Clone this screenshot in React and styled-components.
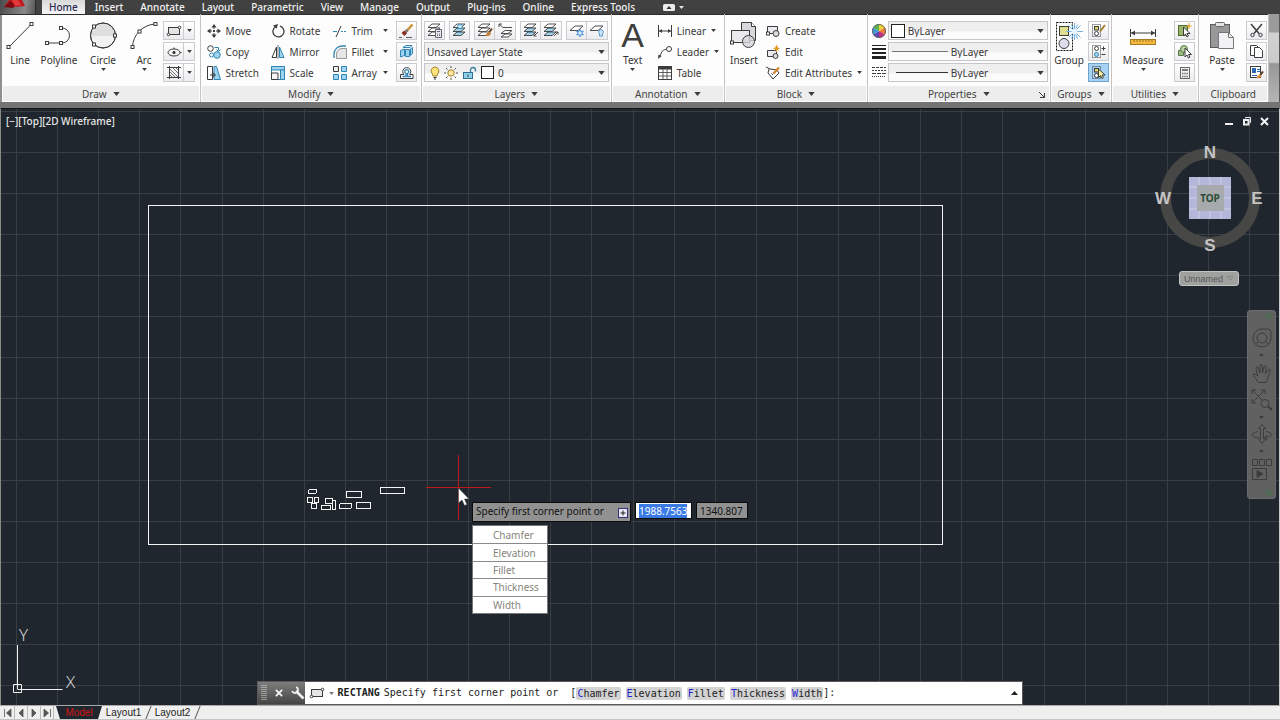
import { useEffect, useRef } from "react";
import styled, { createGlobalStyle, css } from "styled-components";

const GlobalStyle = createGlobalStyle`
  * {
    box-sizing: border-box;
  }

  body {
    margin: 0;
    background: #1f262e;
  }

  button,
  input,
  select {
    font: inherit;
    color: inherit;
    margin: 0;
    padding: 0;
    border: 0;
    background: none;
  }

  svg {
    display: block;
    flex: none;
  }
`;

const Page = styled.div`
  display: flex;
  flex-direction: column;
  min-height: 100vh;
  font-family: "Noto Sans", "Open Sans", sans-serif;
  font-size: 10px;
  line-height: 12px;
  color: #2b2b2b;
`;

/* Menu */

const MenuBar = styled.nav`
  display: flex;
  height: 14px;
  background: #414141;
`;

const AppButton = styled.button`
  width: 36px;
  height: 14px;
  margin-right: 6px;
  overflow: hidden;
  border-right: 1px solid #2c2c2c;
  background: linear-gradient(100deg, #4a4a4a, #8a8a8a 70%, #555);
`;

const MenuTab = styled.button`
  height: 14px;
  padding: 0 7px;
  margin-right: 3px;
  font-weight: 500;
  line-height: 14px;
  color: ${({ $active }) => ($active ? "#2a2a55" : "#f2f2f2")};
  background: ${({ $active }) =>
    $active ? "linear-gradient(#d9d9d9, #f6f6f6)" : "none"};
`;

const MinimizeButton = styled.button`
  display: flex;
  align-items: center;
  gap: 4px;
  margin-left: 18px;
`;

/* Ribbon */

const RibbonBar = styled.div`
  display: flex;
  height: 94px;
  padding: 0 0 0 2px;
  border-bottom: 6px solid #747474;
  background: #fdfdfd;
  box-shadow: inset 0 1px 0 #2c2c2c, inset 2px 0 0 #8f8f8f;
`;

const PanelBox = styled.section`
  display: flex;
  flex-direction: column;
  flex: ${({ $size }) => $size} 1 0;
  min-width: max-content;
  height: 88px;
  border-right: 1px solid #c4c4c4;
`;

const PanelBody = styled.div`
  display: flex;
  height: 72px;
  padding: 7px ${({ $right = 0 }) => $right}px 0 ${({ $left = 0 }) => $left}px;
`;

const PanelTitle = styled.button`
  position: relative;
  display: flex;
  align-items: center;
  justify-content: center;
  gap: 6px;
  height: 15px;
  margin: 0 1px;
  color: #444;
  background: #ededed;
`;

const Launcher = styled.span`
  position: absolute;
  right: 4px;
  top: 6px;
`;

const PanelEnd = styled.div`
  flex: none;
  width: 11px;
  height: 88px;
  border-right: 1px solid #555;
  background: linear-gradient(
    #9b9b9b 18px,
    #d2d2d2 19px,
    #cacaca 48px,
    #989898 50px,
    #b5b5b5
  );
`;

const BigButton = styled.button`
  display: flex;
  flex-direction: column;
  align-items: center;
  width: ${({ $width }) => $width}px;
  height: 54px;
  color: #333;
  white-space: nowrap;
`;

const BigIcon = styled.span`
  display: flex;
  justify-content: center;
  height: 33px;
`;

const CaretSlot = styled.span`
  margin-top: 2px;
`;

const ToolGrid = styled.div`
  display: grid;
  grid-template-columns: ${({ $columns }) => $columns};
  grid-auto-rows: 19px;
  row-gap: 2px;
  margin-left: ${({ $left = 0 }) => $left}px;
  ${({ $fill }) => $fill && "flex: 1;"}
`;

const Tool = styled.button`
  display: flex;
  align-items: center;
  gap: 5px;
  color: #3a3a3a;
  white-space: nowrap;
  ${({ $spread }) =>
    $spread &&
    css`
      padding-right: 8px;

      & > :last-child {
        margin-left: auto;
      }
    `}
`;

const boxed = css`
  display: flex;
  align-items: center;
  justify-content: center;
  height: 19px;
  border: 1px solid #cbcbd0;
  background: linear-gradient(#ffffff, #ececef);
`;

const IconButton = styled.button`
  ${boxed}
  width: 21px;
  ${({ $pressed }) =>
    $pressed &&
    css`
      border-color: #6fa3cc;
      background: #a5d2f5;
    `}
`;

const SplitButton = styled.div`
  display: flex;

  & > :last-child {
    width: 12px;
    margin-left: -1px;
  }
`;

const IconGroup = styled.div`
  display: flex;

  & > * + * {
    margin-left: -1px;
    width: 22px;
  }
`;

const LayerStack = styled.div`
  display: flex;
  flex-direction: column;
  flex: 1;
  gap: 2px;
`;

const LayerRow = styled.div`
  display: flex;
  gap: 4px;
`;

const ComboBox = styled.div`
  position: relative;
  display: flex;
  align-items: center;
  gap: 3px;
  min-width: 0;
  height: 19px;
  padding: 0 5px 0 2px;
  border: 1px solid #c6c6ca;
  background: linear-gradient(#efeff0 50%, #fbfbfb 60%);

  select {
    appearance: none;
    flex: 1;
    min-width: 0;
    height: 17px;
    outline: none;
    color: #3a3a3a;
  }

  > svg:last-child {
    position: absolute;
    right: 3px;
    top: 7px;
    pointer-events: none;
  }
`;

const LayerIcons = styled.span`
  display: flex;
  align-items: center;
  gap: 4px;
  padding: 0 1px 0 3px;
`;

const Swatch = styled.span`
  width: ${({ $size }) => $size}px;
  height: ${({ $size }) => $size}px;
  border: 1px solid #222;
  background: #fff;
`;

const LineSample = styled.span`
  width: ${({ $width }) => $width}px;
  height: 1px;
  margin-left: auto;
  background: ${({ $color }) => $color};
`;

const SampleSlot = styled.span`
  display: flex;
  width: 57px;
`;

const RowIcon = styled.span`
  display: flex;
  align-items: center;
`;

/* Drawing area */

const Viewport = styled.main`
  position: relative;
  flex: 1;
  min-height: 480px;
  overflow: hidden;
  border-left: 1px solid #8b8b86;
  border-right: 1px solid #c8c8c8;
  border-top: 1px solid #11161b;
  background: #1f262e;
`;

const Drawing = styled.svg`
  position: absolute;
  inset: 0;
  width: 100%;
  height: 100%;
`;

const ViewBar = styled.div`
  position: relative;
  display: flex;
  justify-content: space-between;
  padding: 6px 10px 0 5px;
  font-weight: 500;
  color: #e6e6e6;

  div {
    display: flex;
    align-items: center;
    gap: 8px;
  }
`;

const ViewCube = styled.div`
  position: absolute;
  top: 33px;
  right: 13px;
  display: flex;
  flex-direction: column;
  align-items: center;
`;

const UcsButton = styled.button`
  display: flex;
  align-items: center;
  justify-content: space-between;
  width: 60px;
  height: 15px;
  margin: 17px 2px 0 0;
  padding: 0 4px;
  border: 1px solid #c2c4c2;
  border-radius: 3px;
  font-family: "Liberation Sans", sans-serif;
  font-size: 9px;
  color: #565856;
  background: #9fa19f;
`;

const NavBar = styled.div`
  position: absolute;
  top: 201px;
  right: 3px;
  display: flex;
  flex-direction: column;
  align-items: center;
  width: 29px;
  height: 189px;
  padding-top: 14px;
  border: 1px solid #6b6b70;
  border-radius: 3px;
  background: #616161;
`;

const NavDot = styled.span`
  position: absolute;
  right: 3px;
  ${({ $edge }) => $edge}: 2px;
  width: 6px;
  height: 6px;
  border: 1px solid #3f7a45;
  border-radius: 50%;
`;

const NavButton = styled.button`
  display: flex;
  align-items: center;
  justify-content: center;
  width: 24px;
  height: ${({ $height }) => $height}px;
`;

const DynamicInput = styled.div`
  position: absolute;
  left: 471px;
  top: 393px;
  display: flex;
  align-items: flex-start;
  gap: 4px;
`;

const Prompt = styled.label`
  display: flex;
  align-items: center;
  justify-content: space-between;
  width: 159px;
  height: 20px;
  padding: 0 2px 2px 3px;
  border: 1px solid #0c0c0c;
  color: #111;
  background: #919191;

  svg {
    margin-top: 4px;
  }
`;

const Coordinate = styled.input`
  && {
    width: ${({ $width }) => $width}px;
    height: 17px;
    padding: 0 3px;
    border: 1px solid #0c0c0c;
    outline: none;
    color: #111;
    background: ${({ $active }) => ($active ? "#fff" : "#919191")};
  }

  &::selection {
    color: #fff;
    background: #3a7ae4;
  }
`;

const OptionMenu = styled.div`
  position: absolute;
  left: 471px;
  top: 416px;
  display: grid;
  grid-auto-rows: 1fr;
  width: 76px;
  height: 89px;
  border: 1px solid #777;
  background: #fff;
`;

const Option = styled.button`
  padding-left: 20px;
  text-align: left;
  color: #85857a;

  & + & {
    border-top: 1px solid #8a8a8a;
  }
`;

const CommandLine = styled.div`
  position: absolute;
  left: 20%;
  right: 20%;
  bottom: 0;
  display: flex;
  height: 24px;
  border: 1px solid #595959;
  font-family: "DejaVu Sans Mono", monospace;
  color: #222;
  background: #fff;
`;

const CommandGrip = styled.div`
  display: flex;
  align-items: center;
  gap: 8px;
  width: 47px;
  padding: 0 3px;
  background: linear-gradient(#7d7d7d, #454545);
`;

const CommandText = styled.div`
  display: flex;
  align-items: center;
  flex: 1;
  gap: 4px;
  padding: 0 4px;
  white-space: nowrap;

  > :last-child {
    margin-left: auto;
  }
`;

const Keyword = styled.button`
  height: 13px;
  padding: 0 1px;
  line-height: 13px;
  border-radius: 2px;
  background: #d3d3d3;

  &::first-letter {
    color: #2424d0;
  }
`;

const Keywords = styled.span`
  display: flex;
  align-items: center;
  gap: 5px;
  margin-left: 8px;
`;

const Bracketed = styled.span`
  display: flex;
`;

/* Layout tabs */

const LayoutBar = styled.footer`
  display: flex;
  height: 15px;
  padding-left: 2px;
  border-top: 1px solid #a9a9a9;
  border-bottom: 1px solid #c4c4c4;
  font-family: "Liberation Sans", sans-serif;
  background: #efefef;
`;

const PageButton = styled.button`
  display: flex;
  align-items: center;
  justify-content: center;
  width: 13px;
  border-right: 1px solid #bdbdbd;
`;

const ModelTab = styled.button`
  width: 46px;
  margin-left: 2px;
  color: #d01515;
  background: #1f262e;
  clip-path: polygon(0 0, 100% 0, calc(100% - 4px) 100%, 4px 100%);
`;

const LayoutTab = styled.button`
  position: relative;
  width: 49px;
  padding-right: 6px;
  color: #222;

  &::after {
    content: "";
    position: absolute;
    right: 2px;
    top: 0;
    height: 13px;
    border-right: 1px solid #555;
    transform: skewX(-22deg);
  }
`;

/* Icons */

const INK = "#3c3c3c";
const BLUE = "#2f86b5";
const SKY = "#9fd4ee";

const Icon = ({ w = 14, h = 14, children, ...rest }) => (
  <svg
    width={w}
    height={h}
    viewBox={`0 0 ${w} ${h}`}
    fill="none"
    stroke={INK}
    aria-hidden="true"
    {...rest}
  >
    {children}
  </svg>
);

const Caret = ({ w = 5, color = INK }) => (
  <svg width={w} height={w === 5 ? 3 : 4} viewBox="0 0 8 5" aria-hidden="true">
    <path d="M0 0h8L4 5z" fill={color} />
  </svg>
);

const Knob = ({ x, y }) => (
  <rect x={x - 1.5} y={y - 1.5} width="3" height="3" fill="#fff" />
);

const LineIcon = () => (
  <Icon w={28} h={28}>
    <path d="M2.500 26.500L25.500 3" />
    <Knob x={2.5} y={26} />
    <Knob x={25.5} y={3} />
  </Icon>
);

const PolylineIcon = () => (
  <Icon w={30} h={28}>
    <path d="M3 22H18A7.500 7.500 0 0 0 18 7" />
    <Knob x={3} y={22} />
    <Knob x={17} y={22} />
    <Knob x={17} y={7} />
  </Icon>
);

const CircleIcon = () => (
  <Icon w={28} h={30}>
    <circle cx="14" cy="14.500" r="12.500" fill="#f2f2f2" />
    <path d="M2 15h24a12 12 0 0 0-24 0z" fill="#dedede" stroke="none" />
    <circle cx="14" cy="14.500" r="12.500" />
    <Knob x={5} y={5.5} />
    <Knob x={5} y={23.5} />
    <Knob x={26} y={14.5} />
  </Icon>
);

const ArcIcon = () => (
  <Icon w={28} h={28}>
    <path d="M2.500 26A24 24 0 0 1 25.500 3" />
    <Knob x={2.5} y={26} />
    <Knob x={9.5} y={10.5} />
    <Knob x={25.5} y={3} />
  </Icon>
);

const RectIcon = () => (
  <Icon w={16} h={12}>
    <rect x="2.500" y="2.500" width="11" height="7" fill="#e4e4e4" />
    <circle cx="2.500" cy="9.500" r="1.300" fill="#fff" />
    <circle cx="13.500" cy="2.500" r="1.300" fill="#fff" />
  </Icon>
);

const EllipseIcon = () => (
  <Icon w={16} h={12}>
    <ellipse cx="8" cy="6.500" rx="6" ry="3.500" />
    <circle cx="8" cy="6.500" r="1.200" fill={INK} />
    <path d="M8 3v-1.500M14 6.500h1.500" />
  </Icon>
);

const HatchIcon = () => (
  <Icon w={16} h={15}>
    <path d="M3.500 1v13M12.500 1v13M1 2.500h14M1 12.500h14" />
    <path d="M4 4l8 8M4 7l5 5M7 3l5 5M4 10l2 2M10 3l2 2" strokeWidth=".7" />
  </Icon>
);

const MoveIcon = () => (
  <Icon>
    <path d="M7 1v4M7 9v4M1 7h4M9 7h4" />
    <path
      d="M7 0l2.500 3.500h-5zM7 14l2.500-3.500h-5zM0 7l3.500-2.500v5zM14 7l-3.500-2.500v5z"
      fill={INK}
      stroke="none"
    />
    <rect x="6" y="6" width="2" height="2" fill={INK} stroke="none" />
  </Icon>
);

const RotateIcon = () => (
  <Icon>
    <path d="M4.500 2.800A5.500 5.500 0 1 0 9 2.200" strokeWidth="1.300" />
    <path d="M2 1.500L7 0 5.500 4.800z" fill={INK} stroke="none" />
  </Icon>
);

const TrimIcon = () => (
  <Icon>
    <path d="M0 7.500h4" stroke={BLUE} />
    <path d="M3 13L8 2" />
    <path d="M8 7.500h6" strokeDasharray="2 1" stroke={BLUE} />
  </Icon>
);

const CopyIcon = () => (
  <Icon>
    <circle cx="3.500" cy="3.500" r="2.800" />
    <circle cx="10" cy="10" r="3.300" fill={SKY} stroke={BLUE} />
    <circle cx="4.500" cy="10" r="2" fill="#fff" stroke={BLUE} />
    <path d="M7.500 2.500h4v3M9.500 4.500l2 2 2-2" stroke={BLUE} />
  </Icon>
);

const MirrorIcon = () => (
  <Icon>
    <path d="M5.500 2v10.500H1z" />
    <path d="M8.500 2v10.500H13z" fill={SKY} stroke={BLUE} />
    <path d="M7 0v14" strokeWidth=".7" />
  </Icon>
);

const FilletIcon = () => (
  <Icon>
    <path d="M1 13V9a8 8 0 0 1 8-8h4" stroke={BLUE} strokeWidth="1.300" />
    <path d="M3.500 13.500V9A5.500 5.500 0 0 1 9 3.500h4.500v10z" fill="#e6e6e6" stroke="#999" />
  </Icon>
);

const StretchIcon = () => (
  <Icon>
    <path d="M.5.500h5v13h-5z" fill="#fff" />
    <path d="M7 .5h2.500l4 13H7z" fill={SKY} stroke={BLUE} />
    <path d="M3 9h5M6 7l2.500 2L6 11" />
  </Icon>
);

const ScaleIcon = () => (
  <Icon>
    <path d="M.5.500h13v13h-13z" fill="#fff" stroke={BLUE} />
    <path d="M.5.500h13v3.500H.5z" fill={SKY} stroke={BLUE} />
    <path d="M9.500 4h4v9.500h-4z" fill={SKY} stroke={BLUE} />
    <path d="M.5 7h6.500v6.500H.5z" fill="#f4f4f4" />
  </Icon>
);

const ArrayIcon = () => (
  <Icon>
    <path d="M.5.500h5v5h-5z" fill="#eee" />
    <path
      d="M8.500.500h5v5h-5zM.5 8.500h5v5h-5zM8.500 8.500h5v5h-5z"
      fill={SKY}
      stroke={BLUE}
    />
  </Icon>
);

const EraseIcon = () => (
  <Icon w={15} h={15}>
    <path d="M13.500 1.500L8 7.500" stroke="#c89339" strokeWidth="2.500" />
    <path d="M8.500 7L6 9.500" stroke="#7a7a7a" strokeWidth="3" />
    <path d="M6.500 9L4 11.500" stroke="#8c2f22" strokeWidth="4" />
    <path d="M0 14.500h3M7 14.500h6" strokeWidth=".8" />
  </Icon>
);

const ExplodeIcon = () => (
  <Icon w={15} h={15} stroke={BLUE}>
    <path
      d="M1.500 6.500l4-1.500v6.500l-4 1.500zM6.500 5.500h4v7h-4zM11.500 5l2-1.500v6l-2 2z"
      fill={SKY}
    />
    <path d="M4 3.500l3-2h6l-2 2z" fill="#e3f4fc" />
  </Icon>
);

const OffsetIcon = () => (
  <Icon w={15} h={15}>
    <path d="M1.500 13.500v-4h3.500a4 4 0 1 1 5.500 0h3.500v4z" fill="#fff" />
    <path
      d="M3.500 11.500h3.500V8.500a2 2 0 1 1 1.500 0v3H12"
      stroke={BLUE}
      strokeWidth="1.300"
    />
  </Icon>
);

const LayerSheets = ({ fill = "#fff" }) => (
  <>
    <path d="M1 12.500h8l4-3.500H5z" fill={fill} />
    <path d="M1 8.500h8l4-3.500H5z" fill={fill} />
    <path d="M1 4.500h8l4-3.500H5z" fill="#fff" />
  </>
);

const LayerIcon = ({ fill, children }) => (
  <Icon w={16} h={15} strokeWidth=".9">
    <LayerSheets fill={fill} />
    {children}
  </Icon>
);

const SheetIcon = ({ children }) => (
  <Icon w={16} h={15} strokeWidth=".9">
    <path d="M1 7.500h8l5-4.500H6z" fill="#fff" />
    {children}
  </Icon>
);

const CalcGlyph = () => (
  <path
    d="M8.500 6.500h6v8h-6zM10 8.500h3M10 11h1M12 11h1M10 12.500h1M12 12.500h1"
    fill="#e8e8ee"
    stroke="#556"
  />
);

const BulbIcon = () => (
  <Icon w={10} h={14}>
    <path
      d="M5 1a4 4 0 0 1 2.500 7L7 10H3l-.5-2A4 4 0 0 1 5 1z"
      fill="#ffe27a"
      stroke="#a8842e"
    />
    <path d="M3.500 11.500h3M4 13h2" />
  </Icon>
);

const SunIcon = () => (
  <Icon>
    <circle cx="7" cy="7" r="3.200" fill="#ffe9a0" stroke="#a87f2e" />
    <path
      d="M7 0v2M7 12v2M0 7h2M12 7h2M2 2l1.500 1.500M10.500 10.500L12 12M12 2l-1.500 1.500M3.500 10.500L2 12"
      strokeWidth=".9"
    />
  </Icon>
);

const UnlockIcon = () => (
  <Icon w={15} h={14}>
    <path d="M8.500 7V4a2.500 2.500 0 0 1 5 0v1.500" strokeWidth="1.300" stroke="#3c7f9e" />
    <rect x="1.500" y="6.500" width="9" height="6" fill="#8fd0ec" stroke="#2d6f8f" />
    <path d="M6 8.500v2.500" />
  </Icon>
);

const TextIcon = styled.span`
  font-family: "Liberation Sans", sans-serif;
  font-size: 34px;
  line-height: 29px;
  color: #3f3f3f;
`;

const LinearIcon = () => (
  <Icon>
    <path d="M.5 1v12M13.500 1v12M1 7h12" />
    <path d="M1 7l3-2v4zM13 7l-3-2v4z" fill={INK} stroke="none" />
  </Icon>
);

const LeaderIcon = () => (
  <Icon>
    <path d="M2 12C3 9 3.500 4.500 8 4.500" />
    <path d="M0 14l.500-4.500 3 1.500z" fill={INK} stroke="none" />
    <circle cx="11" cy="4" r="2.500" />
  </Icon>
);

const TableIcon = () => (
  <Icon>
    <rect x=".5" y=".5" width="13" height="13" fill="#fff" />
    <path d="M1 2h12" strokeWidth="3" />
    <path d="M1 6.500h12M1 10h12M5 3v10M9 3v10" strokeWidth=".8" />
  </Icon>
);

const InsertIcon = () => (
  <Icon w={28} h={29}>
    <path d="M11.500 1.500h10l4 4v14h-14z" fill="#d9d9dd" />
    <path d="M21.500 1.500v4h4" fill="#fff" />
    <rect x="1.500" y="9.500" width="18" height="12" fill="#e9e9ec" />
    <circle cx="18.500" cy="20.500" r="6" fill="#d4d4d8" fillOpacity=".8" />
    <Knob x={2} y={21.5} />
  </Icon>
);

const BlockGlyph = () => (
  <>
    <path d="M1.500 2.500h10v7h-10z" fill="#ececf0" />
    <circle cx="10" cy="9.500" r="3" fill="#d9d9de" />
    <Knob x={2} y={9.5} />
  </>
);

const CreateIcon = () => (
  <Icon>
    <BlockGlyph />
  </Icon>
);

const EditBlockIcon = () => (
  <Icon>
    <path d="M1.500 5.500h9v6h-9z" fill="#ececf0" />
    <circle cx="9.500" cy="11" r="2.500" fill="#d9d9de" />
    <path
      d="M10.500 0v7M7.500 3.500h6M8.500 1.500l4 4M12.500 1.500l-4 4"
      stroke="#e39a20"
    />
  </Icon>
);

const EditAttributesIcon = () => (
  <Icon>
    <path d="M0 1l4 2 7 1 2 3-6 6-5-6 1-4" fill="#fff" />
    <path d="M5 7l2 2M7 6l2 2" stroke="#668" />
    <path d="M13 1.500L7.500 7.500" stroke="#d5842d" strokeWidth="2.200" />
  </Icon>
);

const ColorWheelIcon = () => (
  <Icon stroke="none">
    <path d="M7 7V0a7 7 0 0 1 6 3.500z" fill="#f0d33c" />
    <path d="M7 7l6-3.500a7 7 0 0 1 0 7z" fill="#ee7a34" />
    <path d="M7 7l6 3.500A7 7 0 0 1 7 14z" fill="#c2307d" />
    <path d="M7 7v7a7 7 0 0 1-6-3.500z" fill="#5a4bb5" />
    <path d="M7 7l-6 3.500a7 7 0 0 1 0-7z" fill="#3d9bd8" />
    <path d="M7 7L1 3.500A7 7 0 0 1 7 0z" fill="#58b44c" />
    <circle cx="7" cy="7" r="6.500" stroke="#666" />
  </Icon>
);

const LineweightIcon = () => (
  <Icon stroke="#222">
    <path d="M0 .5h14" />
    <path d="M0 4h14" strokeWidth="2" />
    <path d="M0 8h14" strokeWidth="2" />
    <path d="M0 12.500h14" strokeWidth="3" />
  </Icon>
);

const LinetypeIcon = () => (
  <Icon>
    <path d="M0 1.500h14" strokeDasharray="3 1" />
    <path d="M0 4.500h14" strokeDasharray="2 1" />
    <path d="M0 7.500h14" strokeDasharray="4 1" />
    <path d="M0 10.500h14" strokeDasharray="1 1" />
  </Icon>
);

const GroupIcon = () => (
  <Icon w={30} h={30}>
    <rect
      x="2.500"
      y="1.500"
      width="16"
      height="28"
      strokeDasharray="2 1"
      stroke="#111"
    />
    <rect x="5.500" y="5.500" width="9" height="9" fill="#dfe08d" />
    <circle cx="10" cy="22.500" r="5" fill="#dcdcea" />
    <path
      d="M20.500 2v17M12 10.500h17M14.500 4.500l12 12M26.500 4.500l-12 12M17.500 3.500l6 14M23.500 3.500l-6 14"
      stroke="#6fb0e6"
    />
    <circle cx="20.500" cy="10.500" r="3" fill="#eaf6ff" stroke="none" />
  </Icon>
);

const MiniGroup = () => (
  <>
    <rect x="1.500" y="1.500" width="8" height="12" strokeDasharray="1 1" />
    <rect x="3.500" y="3.500" width="4" height="3.500" fill="#e2d569" />
    <circle cx="5.500" cy="10.500" r="2" fill="#fff" />
  </>
);

const UngroupIcon = () => (
  <Icon w={15} h={15}>
    <MiniGroup />
    <path d="M14 2L9 8.500" stroke="#a5812f" strokeWidth="2" />
  </Icon>
);

const GroupEditIcon = () => (
  <Icon w={15} h={15}>
    <rect x="1.500" y="1.500" width="8" height="12" strokeDasharray="1 1" />
    <circle cx="5.500" cy="4.500" r="2" fill="#fff" />
    <circle cx="5.500" cy="10.500" r="2" fill={SKY} stroke={BLUE} />
    <path d="M10.500 4.500h4M12.500 2.500v4M10.500 10.500h4" />
  </Icon>
);

const GroupSelectIcon = () => (
  <Icon w={15} h={15}>
    <MiniGroup />
    <path
      d="M7.500 4v8.500l2-2 1.500 3 1.500-1-1.500-2.500h3z"
      fill="#fff3a0"
    />
  </Icon>
);

const MeasureIcon = () => (
  <Icon w={28} h={28}>
    <path d="M1.500 8v8M26.500 8v8M2 12h24" />
    <path d="M2 12l4-2.500v5zM26 12l-4-2.500v5z" fill={INK} stroke="none" />
    <rect x="1.500" y="18.500" width="25" height="5" fill="#f2b93e" stroke="#a57a22" />
    <path
      d="M5 19v2M8 19v2M11 19v2M14 19v2M17 19v2M20 19v2M23 19v2"
      stroke="#805c14"
      strokeWidth=".7"
    />
  </Icon>
);

const SelectAllIcon = () => (
  <Icon w={15} h={15}>
    <rect x="1.500" y="2.500" width="9" height="10" fill="#9bb46c" stroke="#4f6b2d" />
    <path d="M6.500 4v9l2-2 1.500 3 1.500-1-1.500-2.500h3z" fill="#fff" />
    <path d="M12 0v6M9.500 3h5" stroke="#e39a20" />
  </Icon>
);

const QuickSelectIcon = () => (
  <Icon w={15} h={15}>
    <path d="M1.500 6.500h5v5h-5z" fill="#9fbd85" stroke="#57784a" />
    <circle cx="7" cy="5" r="3.500" fill="#b7cfa2" stroke="#57784a" />
    <path d="M8 4v9l2-2 1.500 3 1.500-1-1.500-2.500h3z" fill="#fff" />
  </Icon>
);

const CalculatorIcon = () => (
  <Icon w={12} h={14}>
    <rect x="1.500" y="1.500" width="9" height="11" fill="#f1f1f1" stroke="#666" />
    <path d="M3 4h6" strokeWidth="2" stroke="#777" />
    <path
      d="M3 7.500h6M3 10.500h6"
      strokeDasharray="1.500 .75"
      strokeWidth="1.500"
      stroke="#777"
    />
  </Icon>
);

const PasteIcon = () => (
  <Icon w={26} h={29}>
    <rect x="1.500" y="3.500" width="19" height="23" fill="#98989b" stroke="#5c5c5c" />
    <rect x="6.500" y="1.500" width="9" height="4" rx="1" fill="#e4e4e4" stroke="#666" />
    <path d="M9.500 11.500h10l5 5v11h-15z" fill="#f2f2f5" stroke="#777" />
    <path d="M19.500 11.500v5h5" stroke="#777" />
  </Icon>
);

const CutIcon = () => (
  <Icon w={15} h={15}>
    <path d="M2 1l8 9.500M13 1L5 10.500" strokeWidth="1.500" />
    <circle cx="3.500" cy="12" r="1.700" />
    <circle cx="11.500" cy="12" r="1.700" />
  </Icon>
);

const CopyClipIcon = () => (
  <Icon w={15} h={15}>
    <path d="M1.500 1.500h6l2 2v8h-8z" fill="#fff" />
    <path d="M5.500 3.500h5l3 3v7h-8z" fill="#fff" />
  </Icon>
);

const MatchIcon = () => (
  <Icon w={15} h={15}>
    <rect x="1.500" y="1.500" width="10" height="11" fill="#fff" />
    <path d="M3 3h4v5H3z" fill="#2e64b0" stroke="none" />
    <path d="M8 4.500h3M8 6.500h3M3 10.500h5" stroke="#2e64b0" />
    <path d="M14 6.500l-3 4" stroke="#5b3a21" strokeWidth="2" />
    <path
      d="M11.500 9.500c-1 0-4 1-4 3.500 2.500 1 5-1 5-2.500z"
      fill="#d98a3a"
      stroke="none"
    />
  </Icon>
);

const WrenchIcon = () => (
  <Icon w={14} h={14}>
    <path d="M5 5l7.500 7.500" stroke="#f2f2f2" strokeWidth="2.500" />
    <path
      d="M5 1.200A3 3 0 1 1 1.200 5"
      stroke="#f2f2f2"
      strokeWidth="1.800"
    />
  </Icon>
);

const CrossIcon = ({ size = 9 }) => (
  <svg width={size} height={size} viewBox="0 0 9 9" aria-hidden="true">
    <path d="M1 1l7 7M8 1L1 8" stroke="#f4f4f4" strokeWidth="2" />
  </svg>
);

/* Parts */

const ToolButton = ({ icon, label, caret, spread }) => (
  <Tool $spread={spread}>
    {icon}
    <span>{label}</span>
    {caret && <Caret />}
  </Tool>
);

const LargeTool = ({ icon, label, caret, width }) => (
  <BigButton $width={width}>
    <BigIcon>{icon}</BigIcon>
    {label}
    {caret && (
      <CaretSlot>
        <Caret />
      </CaretSlot>
    )}
  </BigButton>
);

const Panel = ({
  title,
  size,
  left,
  right,
  menu = true,
  launcher,
  children,
}) => (
  <PanelBox $size={size}>
    <PanelBody $left={left} $right={right}>
      {children}
    </PanelBody>
    <PanelTitle>
      {title}
      {menu && <Caret w={7} />}
      {launcher && (
        <Launcher>
          <Icon w={6} h={6}>
            <path d="M0 0l5 5M5.500 1v4.500H1" />
          </Icon>
        </Launcher>
      )}
    </PanelTitle>
  </PanelBox>
);

const Split = ({ icon, label }) => (
  <SplitButton>
    <IconButton aria-label={label}>{icon}</IconButton>
    <IconButton aria-label={`${label} options`}>
      <Caret />
    </IconButton>
  </SplitButton>
);

const Combo = ({ label, value, children }) => (
  <ComboBox>
    {children}
    <select aria-label={label} defaultValue={value}>
      <option>{value}</option>
    </select>
    <Caret w={7} />
  </ComboBox>
);

const MENU_TABS = [
  "Home",
  "Insert",
  "Annotate",
  "Layout",
  "Parametric",
  "View",
  "Manage",
  "Output",
  "Plug-ins",
  "Online",
  "Express Tools",
];

const OPTIONS = ["Chamfer", "Elevation", "Fillet", "Thickness", "Width"];

function Menu() {
  return (
    <MenuBar>
      <AppButton aria-label="Application menu">
        <svg width="35" height="14" viewBox="0 0 35 14" aria-hidden="true">
          <path d="M4 7L9 0h13l3 6-10 1z" fill="#c31a1f" />
          <path d="M4 7l6-6 5 4-2 3z" fill="#7d0b10" />
          <path d="M12 0h6l3 5-6 1z" fill="#e23a3a" />
        </svg>
      </AppButton>
      {MENU_TABS.map((tab, index) => (
        <MenuTab key={tab} $active={index === 0}>
          {tab}
        </MenuTab>
      ))}
      <MinimizeButton aria-label="Minimize ribbon">
        <svg width="12" height="7" viewBox="0 0 12 7" aria-hidden="true">
          <rect width="12" height="7" rx="1.500" fill="#ececec" />
          <path d="M3.500 5L6 2l2.500 3z" fill="#333" />
        </svg>
        <Caret color="#e8e8e8" />
      </MinimizeButton>
    </MenuBar>
  );
}

function Ribbon() {
  return (
    <RibbonBar>
      <Panel title="Draw" size={199}>
        <LargeTool icon={<LineIcon />} label="Line" width={36} />
        <LargeTool icon={<PolylineIcon />} label="Polyline" width={42} />
        <LargeTool icon={<CircleIcon />} label="Circle" width={46} caret />
        <LargeTool icon={<ArcIcon />} label="Arc" width={36} caret />
        <ToolGrid $columns="32px" $left={1}>
          <Split icon={<RectIcon />} label="Rectangle" />
          <Split icon={<EllipseIcon />} label="Ellipse" />
          <Split icon={<HatchIcon />} label="Hatch" />
        </ToolGrid>
      </Panel>

      <Panel title="Modify" size={222} left={6}>
        <ToolGrid $columns="64px 62px 63px 21px">
          <ToolButton icon={<MoveIcon />} label="Move" />
          <ToolButton icon={<RotateIcon />} label="Rotate" />
          <ToolButton icon={<TrimIcon />} label="Trim" caret spread />
          <IconButton aria-label="Erase">
            <EraseIcon />
          </IconButton>
          <ToolButton icon={<CopyIcon />} label="Copy" />
          <ToolButton icon={<MirrorIcon />} label="Mirror" />
          <ToolButton icon={<FilletIcon />} label="Fillet" caret spread />
          <IconButton aria-label="Explode">
            <ExplodeIcon />
          </IconButton>
          <ToolButton icon={<StretchIcon />} label="Stretch" />
          <ToolButton icon={<ScaleIcon />} label="Scale" />
          <ToolButton icon={<ArrayIcon />} label="Array" caret spread />
          <IconButton aria-label="Offset">
            <OffsetIcon />
          </IconButton>
        </ToolGrid>
      </Panel>

      <Panel title="Layers" size={190} left={2} right={2}>
        <LayerStack>
          <LayerRow>
            <IconButton aria-label="Layer properties">
              <LayerIcon>
                <CalcGlyph />
              </LayerIcon>
            </IconButton>
            <IconButton aria-label="Make current">
              <LayerIcon fill={SKY}>
                <circle cx="8" cy="3.500" r="2.300" fill="#cfeaf7" stroke={BLUE} />
              </LayerIcon>
            </IconButton>
            <IconGroup>
              <IconButton aria-label="Match layer">
                <LayerIcon>
                  <path d="M15 5.500l-3 4" stroke="#6a4424" strokeWidth="2" />
                  <path
                    d="M13 9c-2 0-4 1-4.500 4 3 1 5.500-1 5.500-3z"
                    fill="#c8823c"
                    stroke="none"
                  />
                </LayerIcon>
              </IconButton>
              <IconButton aria-label="Previous layer">
                <Icon w={16} h={15} strokeWidth=".9">
                  <path d="M4 14h7l4-3H8zM4 10.500h7l4-3H8z" fill="#fff" />
                  <path d="M15 4.500H6M2 1l4 3.500M2 1v3M2 1h3" />
                </Icon>
              </IconButton>
            </IconGroup>
            <IconGroup>
              <IconButton aria-label="Isolate layer">
                <LayerIcon fill={SKY}>
                  <path d="M15 9l-4 4M11 10.500V13h2.500" />
                </LayerIcon>
              </IconButton>
              <IconButton aria-label="Unisolate layer">
                <LayerIcon fill={SKY}>
                  <path d="M11 13l4-4M12.500 9H15v2.500" />
                </LayerIcon>
              </IconButton>
            </IconGroup>
            <IconGroup>
              <IconButton aria-label="Freeze layer">
                <SheetIcon>
                  <path
                    d="M11 6v8M7.500 8l7 4M14.500 8l-7 4"
                    stroke="#3b87cf"
                    strokeWidth="1.300"
                  />
                  <circle cx="11" cy="10" r="2.300" fill="#d8efff" stroke="#3b87cf" />
                </SheetIcon>
              </IconButton>
              <IconButton aria-label="Turn layer off">
                <SheetIcon>
                  <path
                    d="M12 6.500a2.500 2.500 0 0 1 1.500 4.300V13h-3v-2.200A2.500 2.500 0 0 1 12 6.500z"
                    fill="#c9e6fb"
                    stroke="#4a90c4"
                  />
                </SheetIcon>
              </IconButton>
            </IconGroup>
          </LayerRow>
          <Combo label="Layer state" value="Unsaved Layer State" />
          <Combo label="Layer" value="0">
            <LayerIcons>
              <BulbIcon />
              <SunIcon />
              <UnlockIcon />
              <Swatch $size={13} />
            </LayerIcons>
          </Combo>
        </LayerStack>
      </Panel>

      <Panel title="Annotation" size={113}>
        <LargeTool icon={<TextIcon>A</TextIcon>} label="Text" width={42} caret />
        <ToolGrid $columns="auto" $left={4}>
          <ToolButton icon={<LinearIcon />} label="Linear" caret />
          <ToolButton icon={<LeaderIcon />} label="Leader" caret />
          <ToolButton icon={<TableIcon />} label="Table" />
        </ToolGrid>
      </Panel>

      <Panel title="Block" size={143}>
        <LargeTool icon={<InsertIcon />} label="Insert" width={38} />
        <ToolGrid $columns="auto" $left={3}>
          <ToolButton icon={<CreateIcon />} label="Create" />
          <ToolButton icon={<EditBlockIcon />} label="Edit" />
          <ToolButton icon={<EditAttributesIcon />} label="Edit Attributes" caret />
        </ToolGrid>
      </Panel>

      <Panel title="Properties" size={183} left={4} right={2} launcher>
        <ToolGrid $columns="16px 1fr" $fill>
          <RowIcon>
            <ColorWheelIcon />
          </RowIcon>
          <Combo label="Object color" value="ByLayer">
            <Swatch $size={14} />
          </Combo>
          <RowIcon>
            <LineweightIcon />
          </RowIcon>
          <Combo label="Lineweight" value="ByLayer">
            <SampleSlot>
              <LineSample $width={56} $color="#777" />
            </SampleSlot>
          </Combo>
          <RowIcon>
            <LinetypeIcon />
          </RowIcon>
          <Combo label="Linetype" value="ByLayer">
            <SampleSlot>
              <LineSample $width={52} $color="#333" />
            </SampleSlot>
          </Combo>
        </ToolGrid>
      </Panel>

      <Panel title="Groups" size={61}>
        <LargeTool icon={<GroupIcon />} label="Group" width={37} />
        <ToolGrid $columns="21px">
          <IconButton aria-label="Ungroup">
            <UngroupIcon />
          </IconButton>
          <IconButton aria-label="Group edit">
            <GroupEditIcon />
          </IconButton>
          <IconButton aria-label="Group selection" $pressed>
            <GroupSelectIcon />
          </IconButton>
        </ToolGrid>
      </Panel>

      <Panel title="Utilities" size={86}>
        <LargeTool icon={<MeasureIcon />} label="Measure" width={62} caret />
        <ToolGrid $columns="21px">
          <IconButton aria-label="Select all">
            <SelectAllIcon />
          </IconButton>
          <IconButton aria-label="Quick select">
            <QuickSelectIcon />
          </IconButton>
          <IconButton aria-label="Calculator">
            <CalculatorIcon />
          </IconButton>
        </ToolGrid>
      </Panel>

      <Panel title="Clipboard" size={70} menu={false}>
        <LargeTool icon={<PasteIcon />} label="Paste" width={47} caret />
        <ToolGrid $columns="21px">
          <IconButton aria-label="Cut">
            <CutIcon />
          </IconButton>
          <IconButton aria-label="Copy clip">
            <CopyClipIcon />
          </IconButton>
          <IconButton aria-label="Match properties">
            <MatchIcon />
          </IconButton>
        </ToolGrid>
      </Panel>
      <PanelEnd />
    </RibbonBar>
  );
}

const GRID = 41.1;
const SHAPES = [
  [306, 388, 5, 5],
  [313, 388, 4, 5],
  [310, 394, 5, 5],
  [324, 389, 7, 5],
  [320, 396, 9, 4],
  [331, 391, 3, 9],
  [345, 382, 15, 6],
  [355, 393, 14, 6],
  [379, 378, 24, 6],
];

// More lines than most windows need; the svg clips the rest.
const gridX = Array.from({ length: 100 }, (_, i) => Math.round(15 + i * GRID));
const gridY = Array.from({ length: 60 }, (_, i) => Math.round(2 + i * 41));

const Model = () => (
  <Drawing shapeRendering="crispEdges">
    <g fill="#393e45">
      {gridX.map((x) => (
        <rect key={x} x={x} width="1" height="100%" />
      ))}
      {gridY.map((y) => (
        <rect key={y} y={y} width="100%" height="1" />
      ))}
    </g>
    <g fill="none" stroke="#f4f4f4" transform="translate(.5 .5)">
      <rect x="147" y="96" width="794" height="339" />
      {SHAPES.map(([x, y, w, h]) => (
        <rect key={`${x}-${y}`} x={x} y={y} width={w} height={h} />
      ))}
      <rect x="307" y="380" width="8" height="4" rx="1.500" />
      <rect x="338" y="394" width="12" height="5" rx="1.500" />
    </g>
    <path d="M457.500 346v65M425 378.500h65" stroke="#c01818" />
    <path
      d="M457.500 379v15l3.500-3 2.500 5.500 2.500-1-2.500-5.500h4.500z"
      fill="#fff"
      stroke="#333"
      strokeWidth=".5"
      shapeRendering="auto"
    />
  </Drawing>
);

const UcsIcon = styled.svg`
  position: absolute;
  left: 10px;
  bottom: 10px;
  font-family: "Open Sans", "Noto Sans", sans-serif;
  font-size: 17px;
  font-weight: 300;
`;

function Cube() {
  return (
    <ViewCube>
      <svg
        width="112"
        height="112"
        viewBox="0 0 112 112"
        fontFamily="Liberation Sans, sans-serif"
        fontWeight="700"
        textAnchor="middle"
      >
        <circle cx="56" cy="56" r="44.500" fill="none" stroke="#474746" strokeWidth="11" />
        <rect x="35" y="35" width="42" height="42" fill="#b4b6da" />
        <path
          d="M45 35v42M56 35v42M67 35v42M35 45h42M35 56h42M35 67h42"
          stroke="#cfd0e6"
        />
        <rect x="43" y="43" width="27" height="26" fill="#a7aaac" />
        <text
          x="56"
          y="60"
          fontSize="10"
          fill="#2c4a35"
          fontFamily="Noto Sans, sans-serif"
        >
          TOP
        </text>
        <g fontSize="17" fill="#c4c4c4">
          <text x="56" y="16">N</text>
          <text x="56" y="109">S</text>
          <text x="9" y="62">W</text>
          <text x="103" y="62">E</text>
        </g>
      </svg>
      <UcsButton>
        Unnamed
        <svg width="8" height="5" viewBox="0 0 8 5" aria-hidden="true">
          <path d="M1 .5h6L4 4z" fill="none" stroke="#7f8a7f" />
        </svg>
      </UcsButton>
    </ViewCube>
  );
}

function Navigation() {
  return (
    <NavBar>
      <NavDot $edge="top" />
      <NavButton aria-label="Steering wheel" $height={25}>
        <Icon w={20} h={20} stroke="#3c3c3c">
          <path d="M10 1a9 9 0 1 0 9 9V4a3 3 0 0 0-3-3z" />
          <circle cx="10" cy="10" r="5" />
          <path d="M3.500 16l3-2.500M16.500 16l-3-2.500" />
        </Icon>
      </NavButton>
      <NavButton aria-label="Wheel options" $height={10}>
        <Caret color="#3c3c3c" />
      </NavButton>
      <NavButton aria-label="Pan" $height={26}>
        <Icon w={20} h={21} stroke="#3c3c3c">
          <path d="M6.500 19.500C4 16 2.500 14 1 12c0-1.500 2-1.500 4.500 1L4 5c0-1.500 2-1.500 2.300 0L8 10V2.500c0-1.500 2-1.500 2.200 0L10.500 10l1.700-6.500c.5-1.500 2.200-1 2 .5L13.500 10.500l3-4c1-1 2.300 0 1.800 1.200C17 11 16 16 14 19.500z" />
        </Icon>
      </NavButton>
      <NavButton aria-label="Zoom extents" $height={27}>
        <Icon w={22} h={22} stroke="#3c3c3c">
          <path d="M1 1l13 13M14 1L1 14M1 5V1h4M10 1h4v4M1 10v4h4" />
          <circle cx="14" cy="14.500" r="4" fill="#616161" />
          <path d="M17 17.500l4 3.500" strokeWidth="2" />
        </Icon>
      </NavButton>
      <NavButton aria-label="Zoom options" $height={8}>
        <Caret color="#3c3c3c" />
      </NavButton>
      <NavButton aria-label="Orbit" $height={26}>
        <Icon w={22} h={20} stroke="#3c3c3c">
          <path d="M11 .5l3.500 4h-2V15h2L11 19.500 7.500 15h2V4.500h-2z" />
          <path d="M7 7.500c-8 1.500-8 6 1 6M15 7.500c8 1.500 6 6-1 6M16.500 11l-3 2.500 3 2.500" />
        </Icon>
      </NavButton>
      <NavButton aria-label="Orbit options" $height={8}>
        <Caret color="#3c3c3c" />
      </NavButton>
      <NavButton aria-label="Show motion" $height={30}>
        <Icon w={22} h={22} stroke="#3c3c3c">
          <path d="M1.500.500h5v6h-5zM8.500.500h5v6h-5zM15.500.500h5v6h-5zM1.500 9.500h14v11h-14z" />
          <path d="M6 11.500v7l6-3.500z" fill="#3c3c3c" />
        </Icon>
      </NavButton>
      <NavDot $edge="bottom" />
    </NavBar>
  );
}

function PointPrompt() {
  const xRef = useRef(null);

  useEffect(() => {
    xRef.current.focus();
    xRef.current.select();
  }, []);

  return (
    <>
      <DynamicInput>
        <Prompt htmlFor="point-x">
          Specify first corner point or
          <svg width="10" height="10" viewBox="0 0 10 10" aria-hidden="true">
            <rect x=".5" y=".5" width="9" height="9" fill="#e8e8f4" stroke="#33337a" />
            <path d="M5 2.500v5M2.500 5h5" stroke="#222" />
          </svg>
        </Prompt>
        <Coordinate
          id="point-x"
          ref={xRef}
          $width={57}
          $active
          defaultValue="1988.7563"
        />
        <Coordinate aria-label="Y" $width={52} defaultValue="1340.807" />
      </DynamicInput>
      <OptionMenu>
        {OPTIONS.map((option) => (
          <Option key={option}>{option}</Option>
        ))}
      </OptionMenu>
    </>
  );
}

function Command() {
  return (
    <CommandLine>
      <CommandGrip>
        <svg width="6" height="16" viewBox="0 0 6 16" aria-hidden="true">
          <path d="M1 0v16M3 0v16M5 0v16" stroke="#ddd" strokeDasharray="1 1" />
        </svg>
        <button aria-label="Close">
          <CrossIcon size={8} />
        </button>
        <button aria-label="Customize">
          <WrenchIcon />
        </button>
      </CommandGrip>
      <CommandText>
        <RectIcon />
        <Caret color="#777" />
        <b>RECTANG</b>
        <span>Specify first corner point or</span>
        <Keywords>
          {OPTIONS.map((option, index) => (
            <Bracketed key={option}>
              {index === 0 && "["}
              <Keyword>{option}</Keyword>
              {index === OPTIONS.length - 1 && "]:"}
            </Bracketed>
          ))}
        </Keywords>
        <button aria-label="Command history">
          <svg width="7" height="4" viewBox="0 0 7 4" aria-hidden="true">
            <path d="M0 4h7L3.500 0z" fill="#222" />
          </svg>
        </button>
      </CommandText>
    </CommandLine>
  );
}

const PAGE_BUTTONS = [
  ["First layout", "M1.500 1v8M8 1L3.500 5 8 9z"],
  ["Previous layout", "M7 1L3 5l4 4z"],
  ["Next layout", "M3 1l4 4-4 4z"],
  ["Last layout", "M8.500 1v8M2 1l4.500 4L2 9z"],
];

export default function App() {
  return (
    <Page>
      <GlobalStyle />
      <Menu />
      <Ribbon />
      <Viewport>
        <Model />
        <ViewBar>
          <span>[−][Top][2D Wireframe]</span>
          <div>
            <button aria-label="Minimize">
              <Icon w={10} h={10} stroke="#eee">
                <path d="M1 8h8" strokeWidth="2" />
              </Icon>
            </button>
            <button aria-label="Restore">
              <Icon w={10} h={10} stroke="#eee">
                <path d="M3.500 2.500v-1h5v5h-1" />
                <path d="M2 4h4.500v4.500H2z" strokeWidth="2" />
              </Icon>
            </button>
            <button aria-label="Close drawing">
              <CrossIcon />
            </button>
          </div>
        </ViewBar>
        <Cube />
        <Navigation />
        <UcsIcon width="75" height="76" viewBox="0 0 75 76" aria-hidden="true">
          <path
            d="M6.500 26v44M6.500 70.500h45M2.500 65.500h8v8h-8z"
            fill="none"
            stroke="#f2f2f2"
          />
          <text x="8" y="22" fill="#e0e0e0">
            Y
          </text>
          <text x="55" y="69" fill="#e0e0e0">
            X
          </text>
        </UcsIcon>
        <PointPrompt />
        <Command />
      </Viewport>
      <LayoutBar>
        {PAGE_BUTTONS.map(([label, path]) => (
          <PageButton key={label} aria-label={label}>
            <Icon w={10} h={10} stroke="#555">
              <path d={path} fill="#555" strokeWidth=".8" />
            </Icon>
          </PageButton>
        ))}
        <ModelTab>Model</ModelTab>
        <LayoutTab>Layout1</LayoutTab>
        <LayoutTab>Layout2</LayoutTab>
      </LayoutBar>
    </Page>
  );
}
